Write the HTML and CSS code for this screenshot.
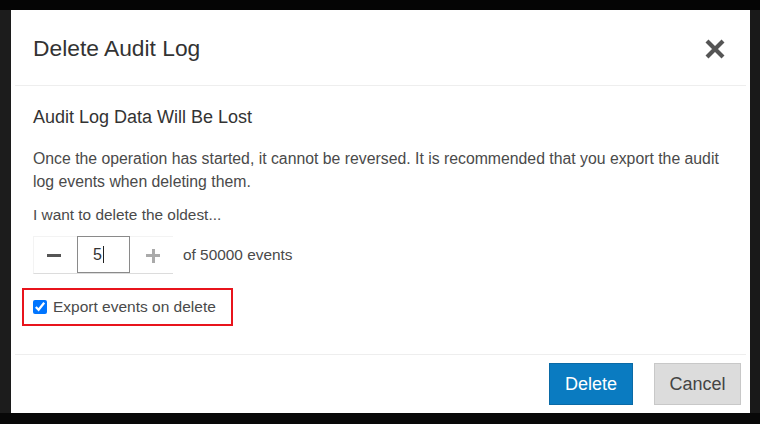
FILE: index.html
```html
<!DOCTYPE html>
<html>
<head>
<meta name="viewport" content="width=device-width, initial-scale=1">
<link rel="stylesheet" href="styles.css">
</head>
<body>
<div class="topbar"></div>
<div class="stage">
  <div class="side"></div>
  <div class="dialog">
    <div class="dialog-header">
      <h2>Delete Audit Log</h2>
      <svg class="close" width="22" height="20" viewBox="0 0 22 20">
        <path d="M3 2 L19 18 M19 2 L3 18" stroke="#555" stroke-width="4.2" fill="none"/>
      </svg>
    </div>
    <div class="dialog-body">
      <h4>Audit Log Data Will Be Lost</h4>
      <p>Once the operation has started, it cannot be reversed. It is recommended that you export the audit log events when deleting them.</p>
      <p class="oldest">I want to delete the oldest...</p>
      <div class="count-row">
        <div class="spinner">
          <div class="spin-btn minus"><span></span></div>
          <div class="spin-value">5<span class="caret"></span></div>
          <div class="spin-btn plus"><span class="h"></span><span class="v"></span></div>
        </div>
        <span class="of">of 50000 events</span>
      </div>
      <div class="highlight">
        <label class="check"><input type="checkbox" checked> Export events on delete</label>
      </div>
    </div>
    <div class="dialog-footer">
      <button class="btn primary">Delete</button>
      <button class="btn">Cancel</button>
    </div>
  </div>
  <div class="side right"></div>
</div>
<div class="bottombar"></div>
</body>
</html>
```

FILE: styles.css
```css
body {
  margin: 0;
  background: #050505;
  font-family: "Liberation Sans", Arial, sans-serif;
  color: #444;
  width: 760px;
  height: 424px;
  overflow: hidden;
}

.topbar {
  height: 10px;
  background: #050505;
}

.stage {
  display: flex;
  height: 403px;
}

.side {
  width: 11px;
  background: #1c1c1c;
}

.side.right {
  width: 10px;
  background: #191919;
}

.bottombar {
  height: 11px;
  background: #080808;
}

.dialog {
  width: 739px;
  background: #fff;
  display: flex;
  flex-direction: column;
}

/* header with title and close cross */
.dialog-header {
  height: 75px;
  margin: 0 4px;
  padding: 0 20px 0 18px;
  border-bottom: 1px solid #eeeeee;
  display: flex;
  align-items: center;
  justify-content: space-between;
}

.dialog-header h2 {
  margin: 0;
  font-size: 22.8px;
  font-weight: normal;
  color: #333;
  padding-top: 1px;
}

.close {
  margin-top: 2px;
}

.dialog-body {
  flex: 1;
  padding: 21px 22px 0 22px;
}

.dialog-body h4 {
  margin: 0;
  font-size: 18px;
  font-weight: normal;
  line-height: 20px;
  color: #333;
}

.dialog-body p {
  margin: 20px 0 0 0;
  font-size: 15.8px;
  line-height: 23px;
  color: #4a4a4a;
}

.dialog-body p.oldest {
  margin-top: 10px;
  font-size: 15.4px;
}

.count-row {
  display: flex;
  align-items: center;
  margin-top: 10px;
}

.spinner {
  display: flex;
  height: 36px;
  border-top: 1px solid #f3f3f3;
  border-left: 1px solid #f3f3f3;
  border-bottom: 1px solid #dcdcdc;
}

.spin-btn {
  width: 43px;
  position: relative;
}

.spin-btn span {
  position: absolute;
  background: #555;
}

.minus span {
  left: 13px;
  top: 17px;
  width: 14px;
  height: 3px;
}

.plus {
  width: 43px;
}

.plus span {
  background: #aaa;
}

.plus .h {
  left: 16px;
  top: 17px;
  width: 14px;
  height: 3px;
}

.plus .v {
  left: 21.5px;
  top: 11.5px;
  width: 3px;
  height: 14px;
}

.spin-value {
  width: 53px;
  border: 1px solid #8a8a8a;
  margin-top: -1px;
  height: 37px;
  font-size: 16px;
  color: #333;
  display: flex;
  align-items: center;
  padding-left: 15px;
  box-sizing: border-box;
}

.caret {
  display: inline-block;
  width: 1px;
  height: 17px;
  background: #222;
  margin-left: 1px;
}

.of {
  margin-left: 10px;
  font-size: 15.4px;
  color: #4a4a4a;
}

/* red marker round the export option */
.highlight {
  margin: 14px 0 0 -11px;
  width: max-content;
  height: 34px;
  border: 2px solid #e8141c;
  display: flex;
  align-items: center;
  padding: 0 15px 0 9px;
}

.check {
  display: flex;
  align-items: center;
  font-size: 15.5px;
  color: #4a4a4a;
}

.check input {
  margin: 0 6px 0 0;
  width: 14px;
  height: 14px;
}

.dialog-footer {
  margin: 0 4px;
  border-top: 1px solid #eeeeee;
  height: 59px;
  display: flex;
  justify-content: flex-end;
  align-items: flex-start;
  padding: 8px 5px 0 0;
  box-sizing: border-box;
  gap: 21px;
}

.btn {
  height: 42px;
  font-family: "Liberation Sans", Arial, sans-serif;
  font-size: 18px;
  border: 1px solid #c8c8c8;
  background: #dcdcdc;
  color: #444;
  width: 87px;
  padding: 0;
}

.btn.primary {
  width: 84px;
  background: #0a7bc1;
  border-color: #0a6aa6;
  color: #fff;
}
```
